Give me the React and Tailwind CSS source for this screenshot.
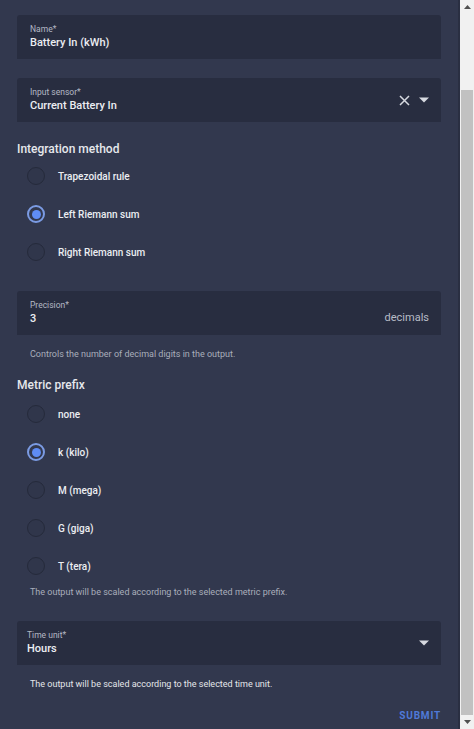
import React from 'react';

const Field = ({ label, value, right, labelX = 'pl-[13px]' }) => (
    <div className={`flex items-center h-[44px] bg-[#282d40] rounded-t-[3px] ${labelX} pr-[12px]`}>
        <div className="flex flex-col flex-1 min-w-0">
            <span className="text-[8.5px] leading-[11px] text-[#b4b8c4]">{label}</span>
            <span className="text-[11px] leading-[16px] font-medium text-[#eceef2]">{value}</span>
        </div>
        {right}
    </div>
);

const Arrow = () => (
    <svg width="10" height="6" viewBox="0 0 10 5" className="text-[#d6d9e0]">
        <path d="M0 0 L10 0 L5 5 Z" fill="currentColor" />
    </svg>
);

const Radio = ({ label, checked }) => (
    <div className="flex items-center h-[38px] pl-[10px]">
        {checked ? (
            <span className="flex items-center justify-center w-[18px] h-[18px] rounded-full border-2 border-[#7b9be3]">
                <span className="w-[9px] h-[9px] rounded-full bg-[#5f8cf5]" />
            </span>
        ) : (
            <span className="w-[18px] h-[18px] rounded-full border border-[#252a3b] bg-[#30364b]" />
        )}
        <span className="ml-[13px] text-[10px] font-medium text-[#eceef2]">{label}</span>
    </div>
);

const Helper = ({ children, light }) => (
    <p className={`px-[13px] text-[9px] leading-[13px] ${light ? 'text-[#e4e6ea]' : 'text-[#a9aebb]'}`}>{children}</p>
);

export default function App() {
    return (
        <div className="flex w-[474px] h-[729px] overflow-hidden bg-[#32384e] font-['Roboto',sans-serif]">
            <div className="flex flex-col flex-1 px-[17px] pt-[15px] border-r-2 border-[#2a2f42]">
                <Field label="Name*" value="Battery In (kWh)" />
                <div className="h-[19px] shrink-0" />
                <Field
                    label="Input sensor*"
                    value="Current Battery In"
                    right={
                        <div className="flex items-center gap-[9px]">
                            <svg width="11" height="11" viewBox="0 0 11 11">
                                <path d="M1 1 L10 10 M10 1 L1 10" stroke="#d6d9e0" strokeWidth="1.5" />
                            </svg>
                            <Arrow />
                        </div>
                    }
                />
                <h2 className="mt-[20px] text-[12px] leading-[15px] font-medium text-[#e6e8ec]">Integration method</h2>
                <div>
                    <Radio label="Trapezoidal rule" />
                    <Radio label="Left Riemann sum" checked />
                    <Radio label="Right Riemann sum" />
                </div>
                <div className="mt-[20px]">
                    <Field
                        label="Precision*"
                        value="3"
                        right={<span className="text-[11px] text-[#b8bcc7] mt-[10px]">decimals</span>}
                    />
                </div>
                <div className="mt-[13px]">
                    <Helper>Controls the number of decimal digits in the output.</Helper>
                </div>
                <h2 className="mt-[17px] text-[12px] leading-[15px] font-medium text-[#e6e8ec]">Metric prefix</h2>
                <div className="mt-[2px]">
                    <Radio label="none" />
                    <Radio label="k (kilo)" checked />
                    <Radio label="M (mega)" />
                    <Radio label="G (giga)" />
                    <Radio label="T (tera)" />
                </div>
                <div className="mt-[1px]">
                    <Helper>The output will be scaled according to the selected metric prefix.</Helper>
                </div>
                <div className="mt-[22px]">
                    <Field label="Time unit*" value="Hours" labelX="pl-[10px]" right={<Arrow />} />
                </div>
                <div className="mt-[13px]">
                    <Helper light>The output will be scaled according to the selected time unit.</Helper>
                </div>
                <div className="flex justify-end mt-[17px]">
                    <button className="text-[10px] leading-[15px] font-bold tracking-[0.08em] text-[#4f7ad8]">SUBMIT</button>
                </div>
            </div>
            <div className="flex flex-col w-[14px] bg-[#f1f1f1]">
                <div className="flex justify-center h-[14px] items-center">
                    <svg width="7" height="4" viewBox="0 0 7 4"><path d="M0 4 L7 4 L3.5 0 Z" fill="#505050" /></svg>
                </div>
                <div className="h-[76px]" />
                <div className="flex-1 mx-[1px] bg-[#c1c1c1]" />
                <div className="flex justify-center h-[14px] items-center">
                    <svg width="7" height="4" viewBox="0 0 7 4"><path d="M0 0 L7 0 L3.5 4 Z" fill="#505050" /></svg>
                </div>
            </div>
        </div>
    );
}
